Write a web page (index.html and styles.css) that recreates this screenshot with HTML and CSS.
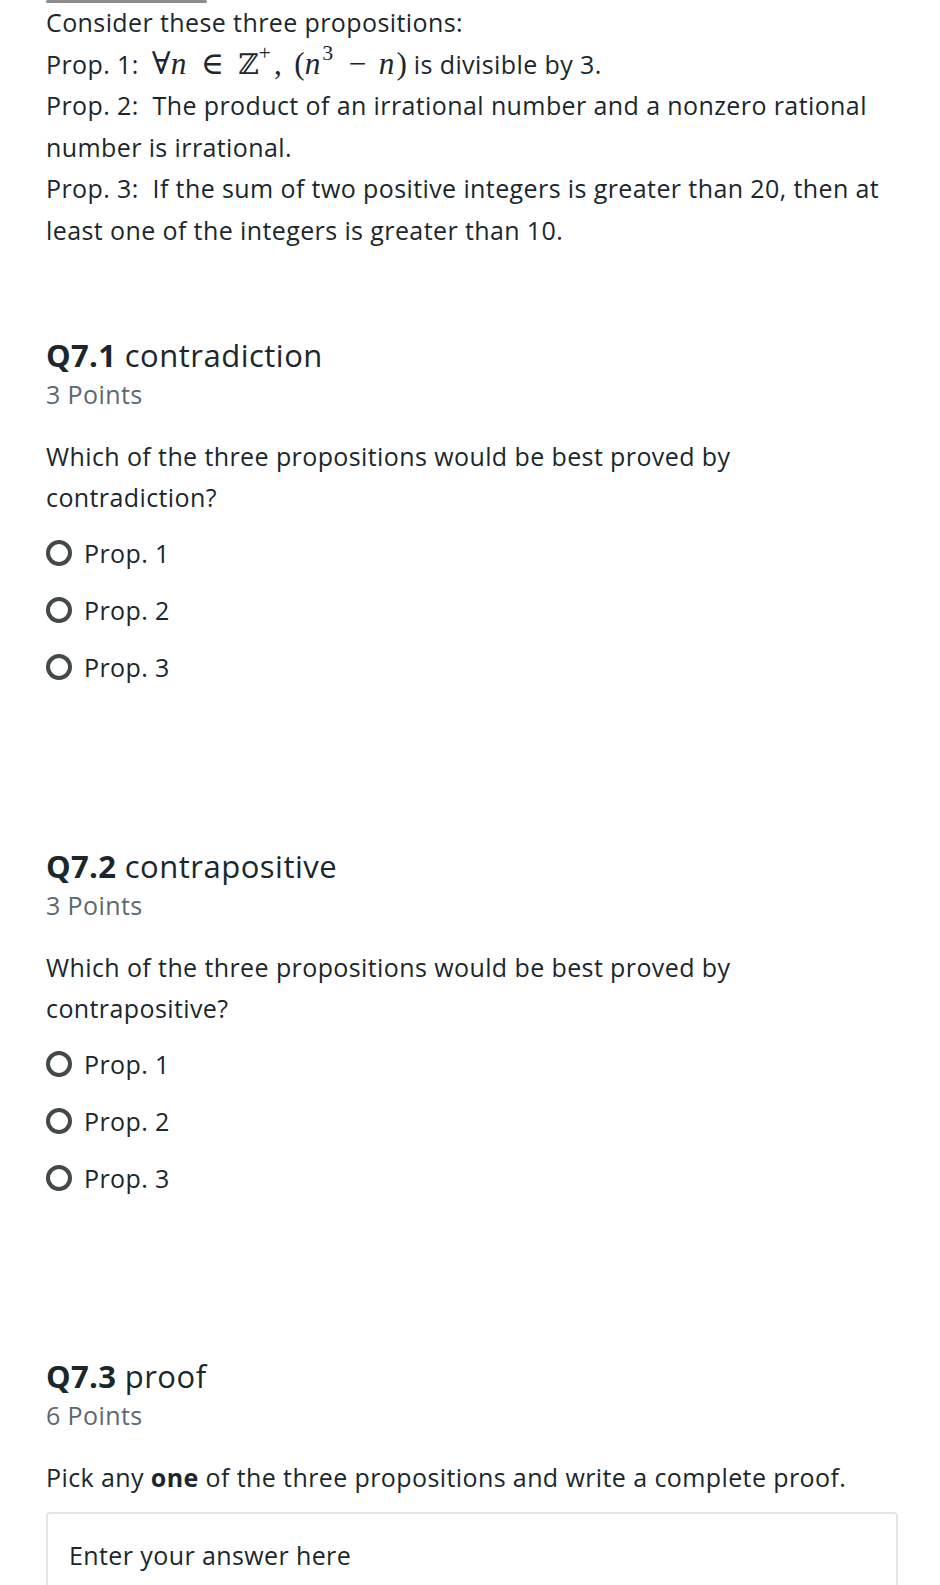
FILE: index.html
```html
<!DOCTYPE html>
<html lang="en">
<head>
<meta charset="utf-8">
<title>Q7</title>
<link rel="stylesheet" href="styles.css">
</head>
<body>
<div class="page">
  <div class="topbar"></div>
  <div class="intro">
    <p>Consider these three propositions:</p>
    <p>Prop. 1:&nbsp;<span class="math"><span class="rm">∀</span><i>n</i><span class="rm rel">∈</span><span class="rm dbl">ℤ</span><sup class="rm">+</sup><span class="rm punct">,</span><span class="rm">(</span><i>n</i><sup class="rm">3</sup><span class="rm bin">−</span><i>n</i><span class="rm">)</span></span> is divisible by 3.</p>
    <p>Prop. 2:&nbsp; The product of an irrational number and a nonzero rational number is irrational.</p>
    <p>Prop. 3:&nbsp; If the sum of two positive integers is greater than 20, then at least one of the integers is greater than 10.</p>
  </div>

  <section class="question">
    <h2 class="q-title"><b>Q7.1</b> contradiction</h2>
    <div class="points">3 Points</div>
    <p class="prompt">Which of the three propositions would be best proved by contradiction?</p>
    <div class="options">
      <label class="option"><span class="radio"></span>Prop. 1</label>
      <label class="option"><span class="radio"></span>Prop. 2</label>
      <label class="option"><span class="radio"></span>Prop. 3</label>
    </div>
  </section>

  <section class="question">
    <h2 class="q-title"><b>Q7.2</b> contrapositive</h2>
    <div class="points">3 Points</div>
    <p class="prompt">Which of the three propositions would be best proved by contrapositive?</p>
    <div class="options">
      <label class="option"><span class="radio"></span>Prop. 1</label>
      <label class="option"><span class="radio"></span>Prop. 2</label>
      <label class="option"><span class="radio"></span>Prop. 3</label>
    </div>
  </section>

  <section class="question">
    <h2 class="q-title"><b>Q7.3</b> proof</h2>
    <div class="points">6 Points</div>
    <p class="prompt">Pick any <b>one</b> of the three propositions and write a complete proof.</p>
    <div class="answer">Enter your answer here</div>
  </section>
</div>
</body>
</html>
```

FILE: styles.css
```css
html, body {
  margin: 0;
  padding: 0;
  background: #ffffff;
}

body {
  font-family: "Open Sans", Lato, sans-serif;
  color: #1a272c;
  font-size: 25px;
  letter-spacing: 0.4px;
  overflow: hidden;
}

.page {
  padding: 0 42px 0 46px;
}

.topbar {
  width: 161px;
  height: 3px;
  border-radius: 2px;
  background: #8a8c8e;
}

.intro {
  margin-top: -1px;
}

.intro p {
  margin: 0;
  line-height: 41.5px;
}

.math {
  font-family: "Liberation Serif", "DejaVu Serif", serif;
  font-size: 1.25em;
  line-height: 1;
  letter-spacing: 0;
  margin-left: 0.2em;
}

.math i {
  font-style: italic;
  margin-right: 2px;
}

.math .rm {
  font-style: normal;
}

.math .rel {
  margin: 0 0.45em 0 0.4em;
}

.math .bin {
  margin: 0 0.4em;
}

.math .punct {
  margin-right: 0.4em;
}

.math .dbl {
  font-family: "DejaVu Serif", serif;
  font-size: 0.9em;
}

.math sup {
  font-size: 0.7em;
  line-height: 0;
  vertical-align: 0.6em;
  margin-right: 3px;
}

.question {
  margin-top: 84px;
}

.question + .question {
  margin-top: 151px;
}

.question:last-child {
  margin-top: 150px;
}

.q-title {
  margin: 0;
  font-size: 31px;
  font-weight: 400;
  line-height: 40px;
  letter-spacing: 0.5px;
}

.q-title b {
  font-weight: 700;
  letter-spacing: 0.3px;
}

.points {
  color: #5b6870;
  line-height: 38px;
}

.prompt {
  margin: 23px 0 0;
  line-height: 41px;
}

.prompt b {
  font-weight: 700;
}

.options {
  margin-top: 6px;
  display: flex;
  flex-direction: column;
}

.option {
  display: flex;
  align-items: center;
  gap: 12px;
  height: 57px;
}

.radio {
  box-sizing: border-box;
  width: 26px;
  height: 26px;
  border: 4px solid #43484b;
  border-radius: 50%;
  flex: none;
}

.answer {
  margin-top: 14px;
  border: 2px solid #e2e5e9;
  border-radius: 4px;
  padding: 21px 21px 60px;
  line-height: 41px;
}
```
